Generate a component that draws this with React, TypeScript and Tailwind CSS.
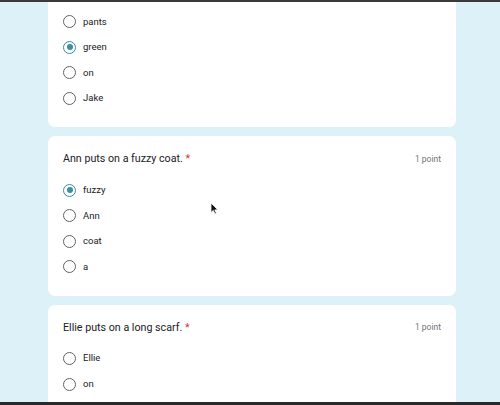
const questions = [
  { title: null, options: ['pants', 'green', 'on', 'Jake'], checked: 'green' },
  { title: 'Ann puts on a fuzzy coat.', options: ['fuzzy', 'Ann', 'coat', 'a'], checked: 'fuzzy' },
  { title: 'Ellie puts on a long scarf.', options: ['Ellie', 'on'], checked: null },
];

function Radio({ checked }: { checked: boolean }) {
  return (
    <span
      className={
        'flex h-[13px] w-[13px] shrink-0 items-center justify-center rounded-full border-[1.5px] ' +
        (checked ? 'border-[#3c8ea3]' : 'border-[#5f6368]')
      }
    >
      {checked && <span className="h-[6px] w-[6px] rounded-full bg-[#3c8ea3]" />}
    </span>
  );
}

export default function App() {
  return (
    <div className="relative h-[405px] w-[500px] overflow-hidden bg-[#dcf1f8] font-['Roboto',sans-serif] text-[#202124]">
      <div className="absolute left-0 right-0 top-0 z-10 h-[2px] bg-[#3a3a3a]" />
      <div className="absolute bottom-0 left-0 right-0 z-10 h-[3px] bg-[#2a2a2a]" />

      <div className="ml-[48px] mt-[-32px] flex w-[408px] flex-col gap-[9px]">
        {questions.map((q, i) => (
          <div key={i} className="rounded-[7px] bg-white px-[15px] pb-[16px] pt-[15px]">
            {q.title ? (
              <div className="flex h-[16px] items-center justify-between">
                <span className="text-[10.7px]">
                  {q.title} <span className="text-[#d93025]">*</span>
                </span>
                <span className="text-[8.5px] text-[#70757a]">1 point</span>
              </div>
            ) : (
              <div className="h-[16px]" />
            )}
            <div className="mt-[10px] flex flex-col">
              {q.options.map((o) => (
                <div key={o} className="flex h-[25.6px] items-center gap-[7px]">
                  <Radio checked={o === q.checked} />
                  <span className="text-[9.5px]">{o}</span>
                </div>
              ))}
            </div>
          </div>
        ))}
      </div>

      <svg
        className="absolute left-[210px] top-[202px] z-20"
        width="9"
        height="13"
        viewBox="0 0 9 13"
      >
        <path d="M1 1 L1 10.5 L3.3 8.4 L5 12 L6.4 11.3 L4.8 7.9 L7.8 7.8 Z" fill="#111" stroke="#fff" strokeWidth="0.8" />
      </svg>
    </div>
  );
}
